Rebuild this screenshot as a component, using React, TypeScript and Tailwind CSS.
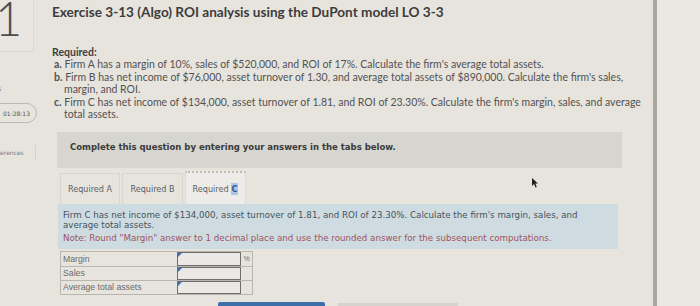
export default function App() {
  return (
    <div className="relative w-[700px] h-[306px] bg-[#e7e4de] flex overflow-hidden font-['Lato',sans-serif] text-[#4a4a4a]">
      {/* Left rail */}
      <aside className="w-[46px] shrink-0 flex flex-col">
        <div className="w-[34px] h-[52px] shrink-0 border-r border-b border-[#dcd9d3] bg-[#e9e6e1] overflow-hidden">
          <div className="-ml-[5px] -mt-[5px] text-[47px] leading-[47px] font-light text-[#4d4d4d]">1</div>
        </div>
        <div className="mt-[31px] -ml-[2px] text-[7px] leading-[10px] text-[#777]">s</div>
        <div className="mt-[10px] -ml-[10px] w-[47px] h-[20px] shrink-0 rounded-full border border-[#bcb9b2] flex items-center justify-end pr-[6px]">
          <span className="text-[6px] text-[#555] font-['DejaVu_Sans',sans-serif]">01:28:13</span>
        </div>
        <div className="mt-[22px] w-[36px] h-[15px] shrink-0 border-r border-[#d6d3cc] flex items-center">
          <span className="-ml-[2px] text-[6px] text-[#6a7c8c] font-['DejaVu_Sans',sans-serif]">ferences</span>
        </div>
      </aside>

      {/* Main question */}
      <main className="w-[607px] shrink-0 pl-[6px] flex flex-col">
        <h1 className="shrink-0 mt-[3px] text-[13.6px] leading-[18px] font-bold text-[#3c3c3c] whitespace-nowrap">
          Exercise 3-13 (Algo) ROI analysis using the DuPont model LO 3-3
        </h1>

        <div className="shrink-0 mt-[25px] text-[10.5px] leading-[12.4px] whitespace-nowrap text-[#525252]">
          <p className="font-bold text-[#404040]">Required:</p>
          <p className="pl-[2px]"><span className="font-bold">a.</span> Firm A has a margin of 10%, sales of $520,000, and ROI of 17%. Calculate the firm's average total assets.</p>
          <p className="pl-[2px]"><span className="font-bold">b.</span> Firm B has net income of $76,000, asset turnover of 1.30, and average total assets of $890,000. Calculate the firm's sales,</p>
          <p className="pl-[12px]">margin, and ROI.</p>
          <p className="pl-[2px]"><span className="font-bold">c.</span> Firm C has net income of $134,000, asset turnover of 1.81, and ROI of 23.30%. Calculate the firm's margin, sales, and average</p>
          <p className="pl-[12px]">total assets.</p>
        </div>

        <div className="shrink-0 mt-[12px] ml-[5px] w-[565px] h-[36px] bg-[#d7d5d0] pl-[13px] pt-[10px]">
          <p className="text-[8.5px] leading-[10px] font-bold text-[#3a3a3a] font-['DejaVu_Sans',sans-serif] whitespace-nowrap">
            Complete this question by entering your answers in the tabs below.
          </p>
        </div>

        {/* Tabs */}
        <div className="shrink-0 ml-[8px] mt-[3px] flex gap-[2px] items-end font-['DejaVu_Sans',sans-serif] text-[8.1px] text-[#5e5e5e]">
          <div className="w-[60px] h-[31px] border border-b-0 border-[#d9d6d0] flex items-center justify-center">Required A</div>
          <div className="w-[61px] h-[31px] border border-b-0 border-[#d9d6d0] flex items-center justify-center">Required B</div>
          <div className="w-[61px] h-[33px] bg-[#eeece8] border border-b-0 border-[#cfccc6] border-t-2 border-t-[#bbb] border-dotted flex items-center justify-center">
            Required <span className="ml-[2px] bg-[#a9c6e4] text-[#2a5a9a] font-bold px-[1px]">C</span>
          </div>
        </div>

        <div className="shrink-0 ml-[6px] w-[560px] h-[45px] bg-[#cedce2] pl-[5px] pt-[6px] font-['DejaVu_Sans',sans-serif] text-[8.7px] leading-[10px] text-[#46525a] whitespace-nowrap">
          <p>Firm C has net income of $134,000, asset turnover of 1.81, and ROI of 23.30%. Calculate the firm's margin, sales, and</p>
          <p>average total assets.</p>
          <p className="mt-[3px] text-[#a0525e]">Note: Round "Margin" answer to 1 decimal place and use the rounded answer for the subsequent computations.</p>
        </div>

        {/* Answer table */}
        <div className="shrink-0 ml-[8px] mt-[2px] w-[193px] border border-[#b9b6b0] font-['Liberation_Sans',sans-serif] text-[8.7px] text-[#6b6b6b]">
          {[
            { label: 'Margin', unit: '%' },
            { label: 'Sales', unit: '' },
            { label: 'Average total assets', unit: '' },
          ].map((row, i) => (
            <div key={row.label} className={`flex h-[14px] ${i > 0 ? 'border-t border-[#b9b6b0]' : ''}`}>
              <div className="w-[116px] pl-[2px] flex items-center">{row.label}</div>
              <div className="relative w-[64px] border-[1.5px] border-[#6e6e6e] bg-[#ebe9e5]">
                <div className="absolute left-0 top-0 w-0 h-0 border-t-[4px] border-t-[#3a6fb0] border-r-[4px] border-r-transparent" />
              </div>
              <div className="flex-1 flex items-center justify-center text-[7px]">{row.unit}</div>
            </div>
          ))}
        </div>

        <div className="mt-auto ml-[166px] flex items-end gap-[13px]">
          <div className="w-[107px] h-[4px] bg-[#3d6ea8] rounded-t-[2px]" />
          <div className="w-[120px] h-[3px] bg-[#d5d3ce]" />
        </div>
      </main>

      {/* Screen bezel divider */}
      <div className="w-[4px] shrink-0 bg-[#aaa7a1]" />
      <div className="flex-1 bg-[#ebe8e3]" />

      {/* mouse cursor */}
      <svg className="absolute left-[532px] top-[178px]" width="7" height="10" viewBox="0 0 7 10">
        <path d="M0 0 L0 8 L2 6 L3.5 9.5 L4.8 9 L3.4 5.6 L6 5.6 Z" fill="#222" />
      </svg>
    </div>
  )
}
